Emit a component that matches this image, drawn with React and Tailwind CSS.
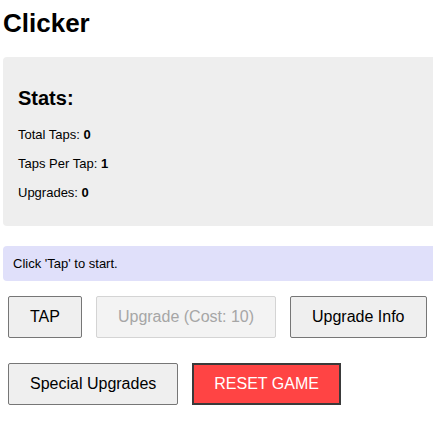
import React, { useState } from 'react';

const btn = 'border border-[#767676] bg-[#efefef] rounded-[2px] px-[21px] h-[42px] text-[16px] text-black';

const App = () => {
  const [taps, setTaps] = useState(0);
  const [perTap] = useState(1);
  const [upgrades] = useState(0);

  return (
    <div className="min-h-screen bg-white pl-[3px] font-['Liberation_Sans',Arial,sans-serif] text-black overflow-hidden">
      <h1 className="pt-[8px] text-[26px] leading-[30px] font-bold">Clicker</h1>

      {/* stats panel */}
      <div className="mt-[19px] w-[440px] h-[169px] bg-[#eeeeee] rounded-[4px] pl-[15px] pt-[30px]">
        <h3 className="text-[20px] leading-[23px] font-bold">Stats:</h3>
        <div className="mt-[17px] flex flex-col gap-[14px] text-[13px] leading-[15px]">
          <p>Total Taps: <b>{taps}</b></p>
          <p>Taps Per Tap: <b>{perTap}</b></p>
          <p>Upgrades: <b>{upgrades}</b></p>
        </div>
      </div>

      <div className="mt-[20px] w-[440px] h-[35px] bg-[#e0e0fa] rounded-[4px] pl-[10px] flex items-center text-[13px]">
        Click 'Tap' to start.
      </div>

      <div className="mt-[15px] pl-[5px] flex gap-[14px]">
        <button className={btn} onClick={() => setTaps(taps + perTap)}>TAP</button>
        <button disabled className="border border-[#d4d4d4] bg-[#f3f3f3] rounded-[2px] px-[21px] h-[42px] text-[16px] text-[#a6a6a6]">
          Upgrade (Cost: 10)
        </button>
        <button className={btn}>Upgrade Info</button>
      </div>

      <div className="mt-[25px] pl-[5px] flex gap-[14px]">
        <button className={btn}>Special Upgrades</button>
        <button className="border-2 border-[#3a3a3a] bg-[#ff4444] px-5 h-[42px] text-[16px] text-white">
          RESET GAME
        </button>
      </div>
    </div>
  );
};

export default App;
